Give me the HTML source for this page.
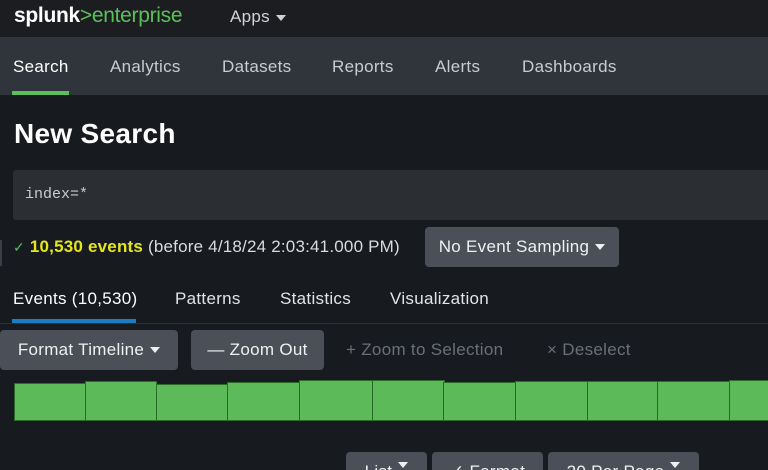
<!DOCTYPE html>
<html><head><meta charset="utf-8"><style>
*{margin:0;padding:0;box-sizing:border-box}
html,body{width:768px;height:470px;overflow:hidden}
body{background:#171a1e;font-family:"Liberation Sans",sans-serif;color:#e1e4e8;position:relative;letter-spacing:0.3px}
.a{position:absolute;white-space:nowrap}
.f{font-size:17px}
.btn{position:absolute;background:#4b5058;border-radius:4px;color:#eef0f2;font-size:17px;display:flex;align-items:center;justify-content:center}
.tri{display:inline-block;width:0;height:0;border-left:5px solid transparent;border-right:5px solid transparent;border-top:6px solid currentColor;margin-left:6px;vertical-align:middle}
.bar{position:absolute;background:#5cba58;border:1px solid #2a6b2a;height:auto;bottom:49px}
</style></head><body>
<div class="a" style="left:0;top:0;width:768px;height:37px;background:#1b1d21"></div>
<div class="a" style="left:14px;top:4px;font-size:21px;font-weight:bold;color:#fff;letter-spacing:-0.3px">splunk<span style="color:#5cc05a;font-weight:normal">&gt;enterprise</span></div>
<div class="a f" style="left:230px;top:7px;color:#cfd3d8">Apps<span class="tri"></span></div>
<div class="a" style="left:0;top:37px;width:768px;height:58px;background:#30353c"></div>
<div class="a f" style="left:13px;top:57px;color:#fff">Search</div>
<div class="a" style="left:12px;top:91px;width:57px;height:4px;background:#5cc05a"></div>
<div class="a f" style="left:110px;top:57px;color:#c8ccd1">Analytics</div>
<div class="a f" style="left:222px;top:57px;color:#c8ccd1">Datasets</div>
<div class="a f" style="left:332px;top:57px;color:#c8ccd1">Reports</div>
<div class="a f" style="left:435px;top:57px;color:#c8ccd1">Alerts</div>
<div class="a f" style="left:522px;top:57px;color:#c8ccd1">Dashboards</div>
<div class="a" style="left:14px;top:118px;font-size:28px;font-weight:bold;color:#fff">New Search</div>
<div class="a" style="left:13px;top:170px;width:760px;height:50px;background:#2b2e33;border-radius:3px"></div>
<div class="a" style="left:25px;top:186px;font-family:'Liberation Mono',monospace;font-size:15px;color:#c8ccd1;letter-spacing:0">index=*</div>
<div class="a" style="left:0;top:240px;width:2px;height:26px;background:#3a3f46"></div>
<div class="a f" style="left:13px;top:237px;color:#d8dbdf;letter-spacing:0.2px"><span style="color:#5cb85c;font-size:14px">✓</span> <b style="color:#e6e619">10,530 events</b> (before 4/18/24 2:03:41.000 PM)</div>
<div class="btn" style="left:425px;top:227px;width:194px;height:40px">No Event Sampling<span class="tri"></span></div>
<div class="a f" style="left:13px;top:289px;color:#fff">Events (10,530)</div>
<div class="a" style="left:12px;top:319px;width:124px;height:4px;background:#1a7ec2"></div>
<div class="a f" style="left:175px;top:289px;color:#e1e4e8">Patterns</div>
<div class="a f" style="left:280px;top:289px;color:#e1e4e8">Statistics</div>
<div class="a f" style="left:390px;top:289px;color:#e1e4e8">Visualization</div>
<div class="a" style="left:0;top:323px;width:768px;height:1px;background:#2c3036"></div>
<div class="btn" style="left:0;top:330px;width:178px;height:40px">Format Timeline<span class="tri"></span></div>
<div class="btn" style="left:191px;top:330px;width:133px;height:40px">— Zoom Out</div>
<div class="a f" style="left:346px;top:340px;color:#6a7078">+ Zoom to Selection</div>
<div class="a f" style="left:547px;top:340px;color:#6a7078">× Deselect</div>
<div class="bar" style="left:14px;width:72px;top:383px"></div>
<div class="bar" style="left:85px;width:72px;top:381px"></div>
<div class="bar" style="left:156px;width:72px;top:384px"></div>
<div class="bar" style="left:227px;width:73px;top:382px"></div>
<div class="bar" style="left:299px;width:74px;top:380px"></div>
<div class="bar" style="left:372px;width:73px;top:380px"></div>
<div class="bar" style="left:443px;width:73px;top:382px"></div>
<div class="bar" style="left:515px;width:73px;top:381px"></div>
<div class="bar" style="left:587px;width:72px;top:381px"></div>
<div class="bar" style="left:657px;width:73px;top:381px"></div>
<div class="bar" style="left:729px;width:45px;top:380px"></div>
<div class="btn" style="left:346px;top:452px;width:81px;height:40px;align-items:flex-start;padding-top:10px">List<span class="tri"></span></div>
<div class="btn" style="left:432px;top:452px;width:111px;height:40px;align-items:flex-start;padding-top:10px">✓ Format</div>
<div class="btn" style="left:548px;top:452px;width:151px;height:40px;align-items:flex-start;padding-top:10px">20 Per Page<span class="tri"></span></div>
</body></html>
